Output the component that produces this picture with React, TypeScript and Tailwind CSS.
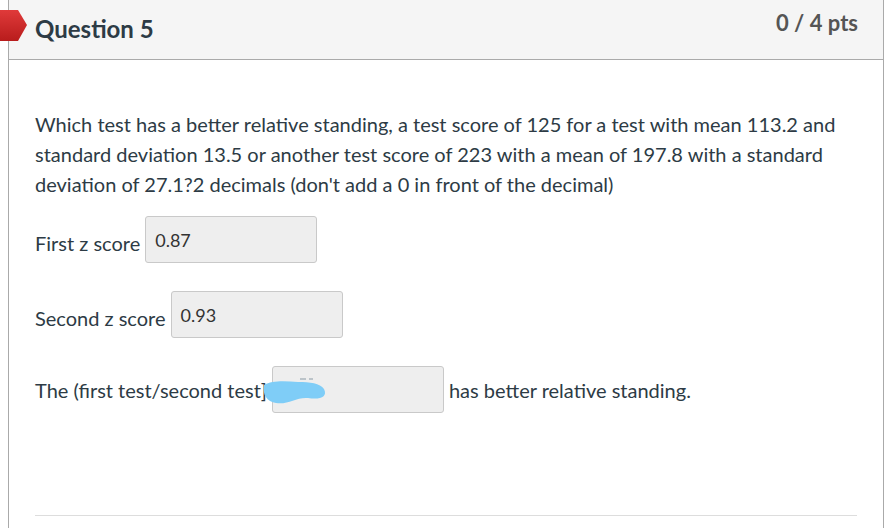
import React from 'react';

const font = { fontFamily: 'Lato, "Open Sans", sans-serif' };

function Field({ value }: { value: string }) {
  return (
    <div className="relative h-[47px] w-[172px] shrink-0 rounded-[3px] border border-[#c9c9c9] bg-[#eeeeee]">
      <span className="absolute left-[9px] top-[14px] text-[18px] leading-none text-[#333]">{value}</span>
    </div>
  );
}

export default function App() {
  return (
    <div className="relative h-[528px] w-[893px] overflow-hidden bg-white text-[#2d3b45]" style={font}>
      {/* red question flag */}
      <svg className="absolute left-0 top-[9px]" width="30" height="34" viewBox="0 0 30 34">
        <defs>
          <linearGradient id="flag" x1="0" y1="0" x2="0" y2="1">
            <stop offset="0" stopColor="#e03a3a" />
            <stop offset="1" stopColor="#b81c1c" />
          </linearGradient>
        </defs>
        <polygon points="0,1 18,1 27,16 18,32 0,32" fill="url(#flag)" />
      </svg>

      <div className="ml-[8px] mr-[9px] h-full border-x border-[#aaaaaa]">
        <div className="flex h-[60px] items-start justify-between border-b border-[#aaaaaa] bg-[#f5f5f5] pl-[26px] pr-[25px]">
          <div className="pt-[15px] text-[24px] font-bold leading-[28px] text-[#2d3b45]">Question 5</div>
          <div className="pt-[9px] text-[22px] font-bold leading-[28px] text-[#555]">0 / 4 pts</div>
        </div>

        <div className="px-[26px]">
          <p className="mt-[49px] text-[20px] leading-[30px]">
            Which test has a better relative standing, a test score of 125 for a test with mean 113.2 and
            standard deviation 13.5 or another test score of 223 with a mean of 197.8 with a standard
            deviation of 27.1?2 decimals (don't add a 0 in front of the decimal)
          </p>

          <div className="mt-[17px] flex items-end gap-[5px] text-[20px]">
            <span className="pb-[10px] leading-none">First z score</span>
            <Field value="0.87" />
          </div>

          <div className="mt-[28px] flex items-end gap-[5px] text-[20px]">
            <span className="pb-[10px] leading-none">Second z score</span>
            <Field value="0.93" />
          </div>

          <div className="relative mt-[28px] flex items-center gap-[5px] text-[20px]">
            <span className="leading-none">The (first test/second test]</span>
            <Field value="" />
            <span className="leading-none">has better relative standing.</span>
            <svg className="absolute left-[227px] top-[10px]" width="66" height="32" viewBox="0 0 66 32">
              <path
                d="M2 9 C10 4 24 5 36 6 C48 6 58 7 62 13 C66 21 58 24 46 22 C34 21 26 29 14 27 C5 26 0 18 2 9 Z"
                fill="#7fcdf7"
              />
              <path d="M38 3 L44 3 M47 3 L51 3" stroke="#8a9aa5" strokeWidth="1" />
            </svg>
          </div>

          <div className="mt-[102px] h-px bg-[#dddddd]" />
        </div>
      </div>
    </div>
  );
}
